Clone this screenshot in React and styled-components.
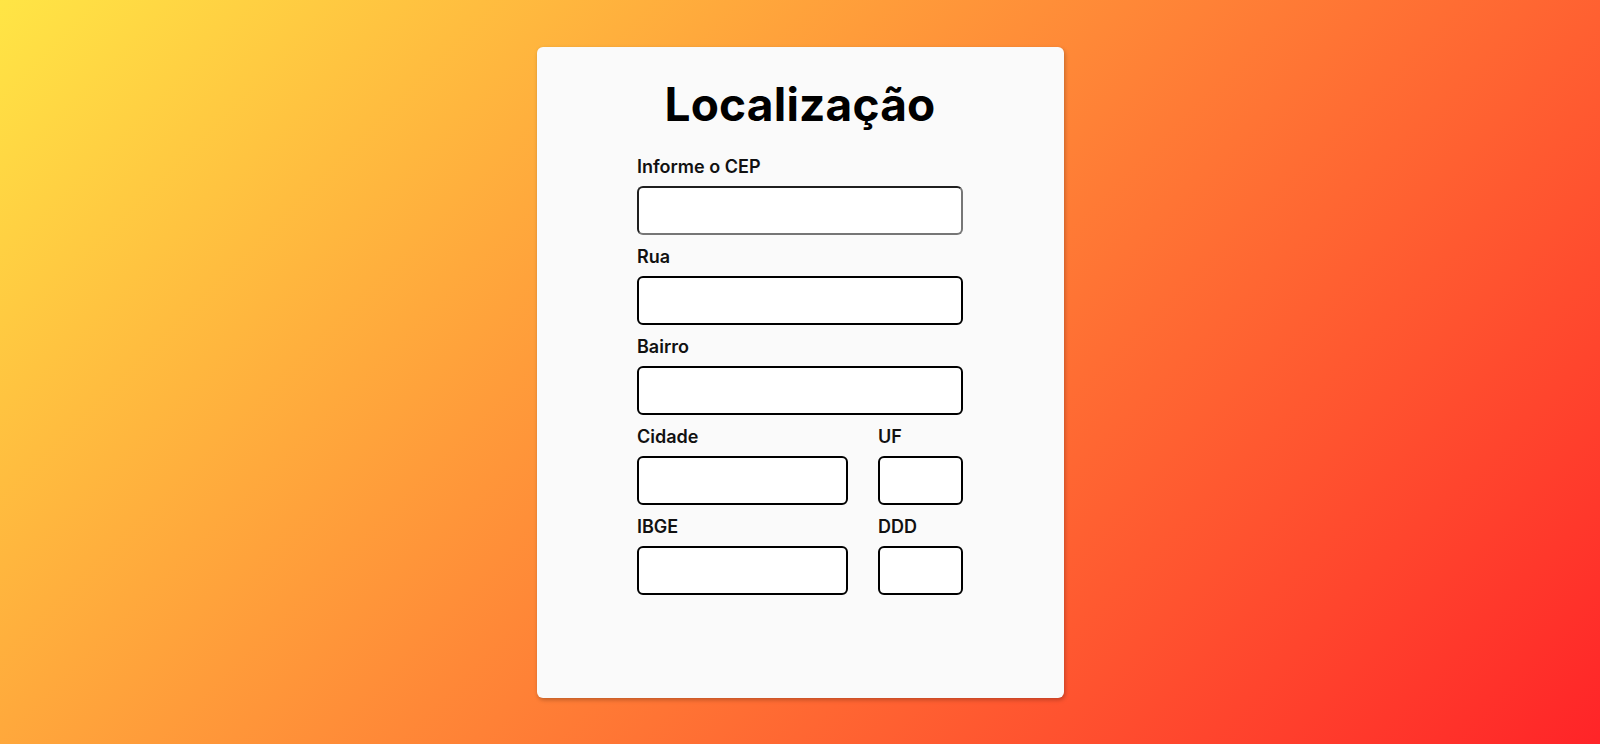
import React from "react";
import styled, { createGlobalStyle } from "styled-components";

const GlobalStyle = createGlobalStyle`
  * { box-sizing: border-box; }
  html, body { margin: 0; padding: 0; }
  body {
    font-family: Inter, "Noto Sans", sans-serif;
    background: linear-gradient(135deg, #ffe545 0%, #ff2428 100%);
    min-height: 100vh;
  }
`;

const Page = styled.main`
  min-height: 100vh;
  display: flex;
  align-items: center;
  justify-content: center;
`;

const Card = styled.section`
  width: 527px;
  height: 651px;
  background: #fafafa;
  border-radius: 6px;
  box-shadow: 1px 2px 4px rgba(0, 0, 0, 0.25);
  padding: 28px 0 0;
  display: flex;
  flex-direction: column;
  align-items: center;
`;

const Title = styled.h1`
  margin: 0 0 23px;
  font-family: Inter, sans-serif;
  font-size: 46px;
  font-weight: 700;
  line-height: 58px;
  color: #000;
  letter-spacing: 0.2px;
`;

const Form = styled.form`
  width: 326px;
  display: flex;
  flex-direction: column;
  gap: 11px;
`;

const Row = styled.div`
  display: flex;
  gap: 30px;
`;

const Field = styled.div`
  display: flex;
  flex-direction: column;
  width: ${(p) => (p.$w ? `${p.$w}px` : "100%")};
  flex: ${(p) => (p.$w ? "none" : "1")};
`;

const Label = styled.label`
  font-family: Inter, sans-serif;
  font-size: 18px;
  font-weight: 600;
  line-height: 21px;
  color: #111;
  margin-bottom: 9px;
`;

const Input = styled.input`
  width: 100%;
  height: 49px;
  background: #fff;
  border: 2px solid #000;
  border-color: ${(p) => (p.$inset ? "#1f1f1f #767676 #767676 #1f1f1f" : "#000")};
  border-radius: 6px;
  padding: 0 10px;
  font-family: Inter, sans-serif;
  font-size: 16px;
  outline: none;
`;

export default function App() {
  return (
    <>
      <GlobalStyle />
      <Page>
        <Card>
          <Title>Localização</Title>
          <Form onSubmit={(e) => e.preventDefault()}>
            <Field>
              <Label htmlFor="cep">Informe o CEP</Label>
              <Input id="cep" $inset />
            </Field>
            <Field>
              <Label htmlFor="rua">Rua</Label>
              <Input id="rua" />
            </Field>
            <Field>
              <Label htmlFor="bairro">Bairro</Label>
              <Input id="bairro" />
            </Field>
            <Row>
              <Field $w={211}>
                <Label htmlFor="cidade">Cidade</Label>
                <Input id="cidade" />
              </Field>
              <Field $w={85}>
                <Label htmlFor="uf">UF</Label>
                <Input id="uf" />
              </Field>
            </Row>
            <Row>
              <Field $w={211}>
                <Label htmlFor="ibge">IBGE</Label>
                <Input id="ibge" />
              </Field>
              <Field $w={85}>
                <Label htmlFor="ddd">DDD</Label>
                <Input id="ddd" />
              </Field>
            </Row>
          </Form>
        </Card>
      </Page>
    </>
  );
}
